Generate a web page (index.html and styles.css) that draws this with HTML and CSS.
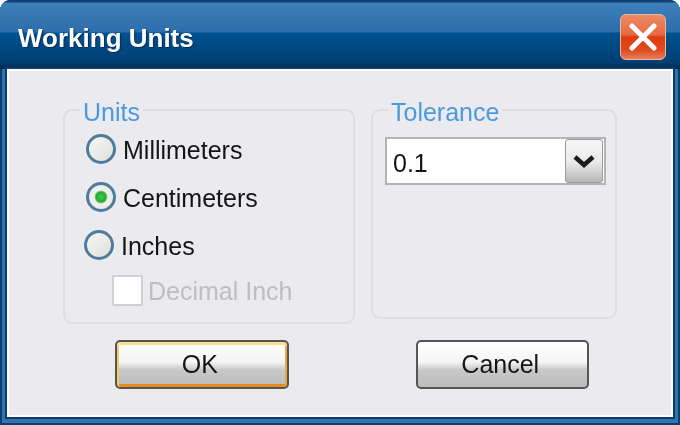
FILE: index.html
```html
<!DOCTYPE html>
<html lang="en">
<head>
    <meta charset="UTF-8">
    <meta name="viewport" content="width=device-width, initial-scale=1.0">
    <title>Working Units</title>
    <link rel="stylesheet" href="styles.css">
</head>
<body>
    <div class="window">
        <div class="titlebar">
            <div class="title">Working Units</div>
            <button type="button" class="close" aria-label="Close">
                <svg width="30" height="28" viewBox="0 0 30 28">
                    <path d="M4 3 L26 25 M26 3 L4 25" stroke="#fff" stroke-width="5" stroke-linecap="round"/>
                </svg>
            </button>
        </div>

        <div class="client">
            <div class="groups">
                <fieldset class="group units">
                    <legend>Units</legend>
                    <label class="option">
                        <input type="radio" name="units" class="radio">
                        <span>Millimeters</span>
                    </label>
                    <label class="option">
                        <input type="radio" name="units" class="radio" checked>
                        <span>Centimeters</span>
                    </label>
                    <label class="option option-inches">
                        <input type="radio" name="units" class="radio">
                        <span>Inches</span>
                    </label>
                    <label class="decimal">
                        <input type="checkbox" class="check" disabled>
                        <span>Decimal Inch</span>
                    </label>
                </fieldset>

                <fieldset class="group tolerance">
                    <legend>Tolerance</legend>
                    <div class="combo">
                        <span class="combo-value">0.1</span>
                        <span class="combo-arrow">
                            <svg width="24" height="14" viewBox="0 0 24 14">
                                <path d="M3 3 L12 11 L21 3" fill="none" stroke="#1c1c1c" stroke-width="4.5"/>
                            </svg>
                        </span>
                    </div>
                </fieldset>
            </div>

            <div class="buttons">
                <button type="button" class="btn btn-default">OK</button>
                <button type="button" class="btn">Cancel</button>
            </div>
        </div>
    </div>
</body>
</html>
```

FILE: styles.css
```css
body {
    margin: 0;
    padding: 0;
    background-color: #fff;
    font-family: "Liberation Sans", Arial, sans-serif;
    font-size: 25px;
    color: #151515;
}

.window {
    width: 680px;
    height: 425px;
    box-sizing: border-box;
    display: flex;
    flex-direction: column;
    padding: 0 5px 6px 5px;
    border-radius: 11px 11px 0 0;
    background-color: #2f74b0;
    box-shadow: inset 2px 0 0 #0d3d6c, inset -2px 0 0 #0d3d6c, inset 0 -2px 0 #0d3d6c;
    overflow: hidden;
    filter: blur(0.5px);
}

.titlebar {
    height: 69px;
    flex: none;
    margin: 0 -5px;
    padding: 4px 14px 0 18px;
    box-sizing: border-box;
    display: flex;
    align-items: center;
    justify-content: space-between;
    background: linear-gradient(#0f4274 0, #0f4274 2px, #3e80ba 3px, #2c6dab 32px, #00528f 33px, #003f74 62px, #022a52 68px);
}

.title {
    margin-top: 4px;
    font-size: 26px;
    font-weight: bold;
    color: #fff;
    text-shadow: 1px 1px 1px #0a2a5a;
}

.close {
    width: 46px;
    height: 46px;
    padding: 0;
    border: 1px solid #e9b9a4;
    border-radius: 6px;
    background: linear-gradient(#ee8a66 0, #e56a44 45%, #de3d10 50%, #df4a1e 80%, #e97e58 100%);
    display: flex;
    align-items: center;
    justify-content: center;
}

.client {
    flex: 1;
    border: 2px solid #fff;
    background-color: #ebeaef;
    padding-top: 24px;
    margin: 0 2px 2px 2px;
    box-shadow: 0 0 0 2px #0d3d6c;
}

.groups {
    display: flex;
    align-items: flex-start;
    gap: 16px;
    padding-left: 54px;
}

.group {
    margin: 0;
    padding: 0;
    box-sizing: border-box;
    border: 2px solid #dfdedf;
    border-radius: 9px;
}

.group legend {
    font-size: 25px;
    line-height: 26px;
    color: #4a9ae0;
    padding: 4px 3px 0 3px;
}

.units {
    width: 292px;
    height: 229px;
    padding: 0 0 0 21px;
}

.units legend {
    margin-left: -6px;
}

.tolerance {
    width: 246px;
    height: 224px;
    padding: 12px 0 0 12px;
}

.tolerance legend {
    margin-left: 3px;
}

.option {
    height: 48px;
    display: flex;
    align-items: center;
    gap: 7px;
}

.option span,
.decimal span {
    padding-top: 2px;
}

.option-inches {
    margin-left: -2px;
}

.radio {
    appearance: none;
    width: 30px;
    height: 30px;
    margin: 0;
    box-sizing: border-box;
    border: 3px solid #4f7c9c;
    border-radius: 50%;
    background: linear-gradient(135deg, #f6f6f6, #dfdfda);
}

.radio:checked {
    background: radial-gradient(circle, #3ccf45 0, #2aa838 5px, #f3f3f0 7px, #dedfd9 100%);
}

.decimal {
    display: flex;
    align-items: center;
    gap: 5px;
    margin: 6px 0 0 26px;
    color: #bebdc3;
}

.check {
    appearance: none;
    width: 31px;
    height: 31px;
    margin: 0;
    box-sizing: border-box;
    border: 2px solid #d0d0d2;
    border-radius: 2px;
    background-color: #fff;
}

.combo {
    width: 221px;
    height: 48px;
    box-sizing: border-box;
    display: flex;
    align-items: stretch;
    border: 2px solid #b4b4b6;
    background-color: #fff;
}

.combo-value {
    flex: 1;
    padding-left: 6px;
    line-height: 48px;
}

.combo-arrow {
    width: 36px;
    margin-right: 1px;
    border: 1px solid #9a9aa0;
    border-radius: 3px;
    background: linear-gradient(#f7f7f7 0, #e8e8e8 55%, #b6b6b6 100%);
    display: flex;
    align-items: center;
    justify-content: center;
}

.buttons {
    display: flex;
    gap: 127px;
    padding-left: 106px;
    margin-top: 16px;
}

.btn {
    width: 173.5px;
    height: 49px;
    padding: 0 4px 0 0;
    box-sizing: border-box;
    font-family: inherit;
    font-size: 25px;
    color: #151515;
    border: 2px solid #555;
    border-radius: 5px;
    background: linear-gradient(#ffffff 0, #f4f4f4 45%, #c8c8c8 62%, #bcbcbc 100%);
}

.btn-default {
    box-shadow: inset 0 3px 0 #fbe08f, inset 2px 0 0 #f7c76a, inset -2px 0 0 #eea53c, inset 0 -3px 0 #e88c1f;
}
```
